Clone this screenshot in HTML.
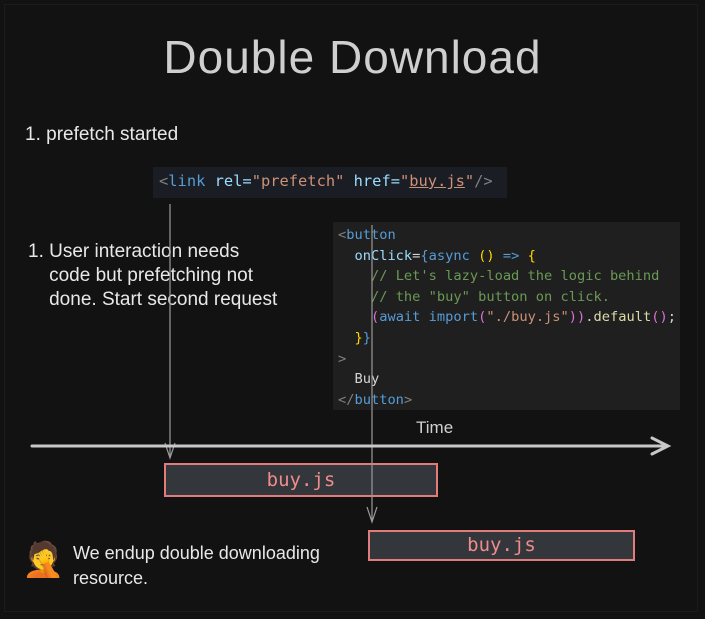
<!DOCTYPE html>
<html><head><meta charset="utf-8"><style>
html,body{margin:0;padding:0;background:#121212;width:705px;height:619px;overflow:hidden;position:relative}
.hw{position:absolute;color:#e8e8e8;font-family:"Comic Sans MS","Liberation Sans",sans-serif;}
.mono{font-family:"DejaVu Sans Mono","Liberation Mono",monospace;position:absolute;white-space:pre}
.box{position:absolute;background:#33363b;border:2px solid #e07c7c;color:#f08c8c;font-family:"DejaVu Sans Mono","Liberation Mono",monospace;font-size:19px;text-align:center;box-sizing:border-box}
</style></head><body>
<div style="position:absolute;left:4px;top:4px;right:7px;bottom:7px;border:1px solid #1c1c1c"></div>
<div class="hw" style="left:0;width:705px;top:30px;text-align:center;font-size:46px;color:#cfcfcf;letter-spacing:1px">Double Download</div>
<div class="hw" style="left:25px;top:124px;font-size:19px">1. prefetch started</div>
<div style="position:absolute;left:153px;top:167px;width:354px;height:31px;background:#1a1d23"></div>
<div class="mono" style="left:159px;top:172px;font-size:15.4px;color:#9cdcfe"><span style="color:#808080">&lt;</span><span style="color:#569cd6">link</span> rel=<span style="color:#ce9178">"prefetch"</span> href=<span style="color:#ce9178">"<u>buy.js</u>"</span><span style="color:#808080">/&gt;</span></div>
<div class="hw" style="left:28px;top:240px;font-size:19px;line-height:24px">1. User interaction needs<br>&nbsp;&nbsp;&nbsp;&nbsp;code but prefetching not<br>&nbsp;&nbsp;&nbsp;&nbsp;done. Start second request</div>
<div style="position:absolute;left:333px;top:222px;width:347px;height:188px;background:#1f1f1f"></div>
<div class="mono" style="left:338px;top:225px;font-size:13.7px;line-height:20.6px;color:#d4d4d4"><span style="color:#808080">&lt;</span><span style="color:#569cd6">button</span>
  <span style="color:#9cdcfe">onClick</span>=<span style="color:#569cd6">{async</span> <span style="color:#ffd700">()</span> <span style="color:#569cd6">=&gt;</span> <span style="color:#ffd700">{</span>
    <span style="color:#6a9955">// Let's lazy-load the logic behind</span>
    <span style="color:#6a9955">// the "buy" button on click.</span>
    <span style="color:#da70d6">(</span><span style="color:#569cd6">await</span> <span style="color:#569cd6">import</span><span style="color:#da70d6">(</span><span style="color:#ce9178">"./buy.js"</span><span style="color:#da70d6">))</span>.<span style="color:#dcdcaa">default</span><span style="color:#da70d6">()</span>;
  <span style="color:#ffd700">}</span><span style="color:#569cd6">}</span>
<span style="color:#808080">&gt;</span>
  Buy
<span style="color:#808080">&lt;/</span><span style="color:#569cd6">button</span><span style="color:#808080">&gt;</span></div>
<div class="hw" style="left:416px;top:418px;font-size:17px;color:#d0d0d0">Time</div>
<div class="box" style="left:164px;top:463px;width:274px;height:34px;line-height:30px">buy.js</div>
<div class="box" style="left:368px;top:530px;width:267px;height:31px;line-height:27px">buy.js</div>
<svg width="705" height="619" style="position:absolute;left:0;top:0">
<g stroke="#9a9a9a" stroke-width="1.2" fill="none">
<path d="M170 204 L170 458 M165 443 L170 458 L175 443"/>
<path d="M372 225 L372 522 M367 507 L372 522 L377 507"/>
</g>
<g stroke="#c8c8c8" stroke-width="3" fill="none" stroke-linecap="round">
<path d="M32 446 L667 446 M652 438 L668 446 L652 454"/>
</g>
</svg>
<div style="position:absolute;left:22px;top:541px;font-size:34px;line-height:40px">🤦</div>
<div class="hw" style="left:73px;top:541px;font-size:18px;line-height:25px">We endup double downloading<br>resource.</div>
</body></html>
